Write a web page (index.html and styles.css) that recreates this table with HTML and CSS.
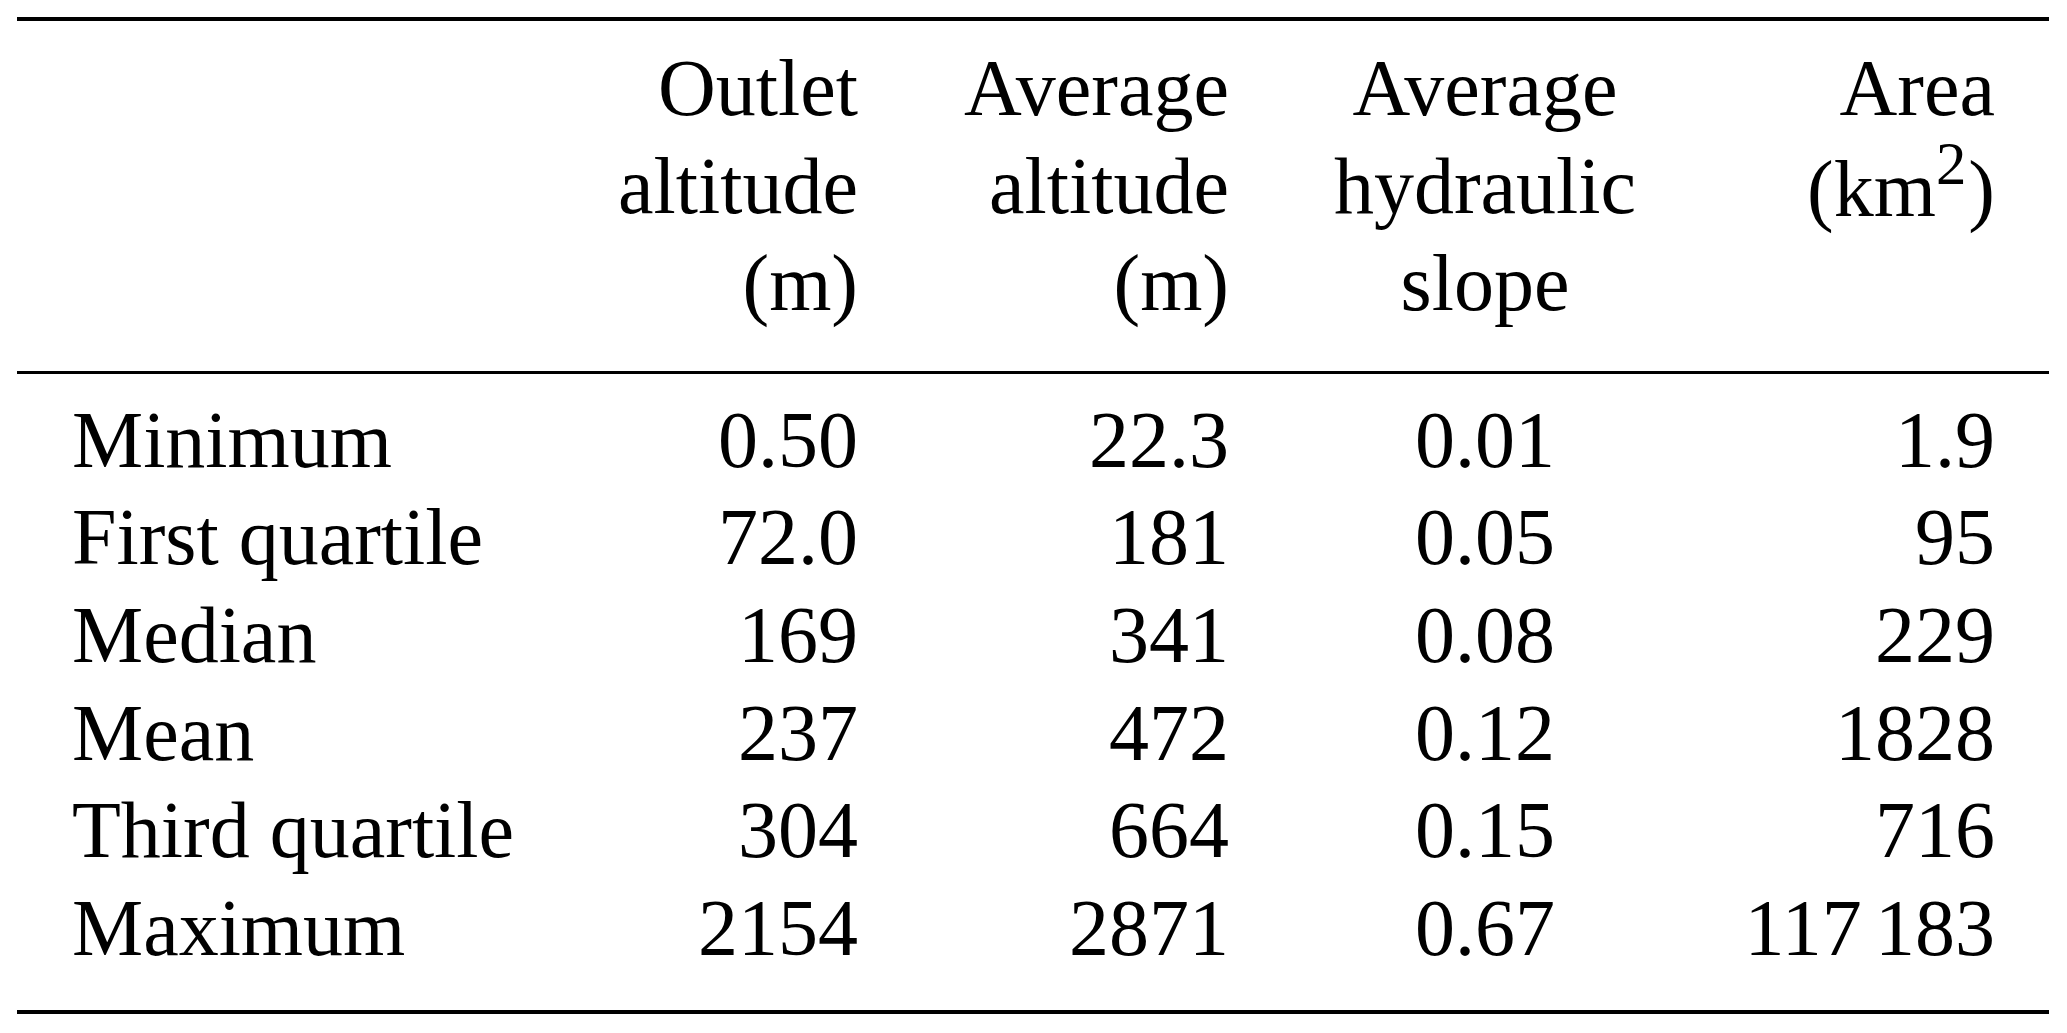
FILE: index.html
```html
<!DOCTYPE html>
<html lang="en">
<head>
<meta charset="utf-8">
<title>Catchment statistics</title>
<link rel="stylesheet" href="styles.css">
</head>
<body>
<div class="tbl">
  <div class="head grid">
    <div class="cell"></div>
    <div class="cell right">Outlet<br>altitude<br>(m)</div>
    <div class="cell right">Average<br>altitude<br>(m)</div>
    <div class="cell center">Average<br>hydraulic<br>slope</div>
    <div class="cell right">Area<br><span class="unit">(km<sup>2</sup>)</span></div>
  </div>
  <div class="body grid">
    <div class="cell">Minimum</div><div class="cell right">0.50</div><div class="cell right">22.3</div><div class="cell center">0.01</div><div class="cell right">1.9</div>
    <div class="cell">First quartile</div><div class="cell right">72.0</div><div class="cell right">181</div><div class="cell center">0.05</div><div class="cell right">95</div>
    <div class="cell">Median</div><div class="cell right">169</div><div class="cell right">341</div><div class="cell center">0.08</div><div class="cell right">229</div>
    <div class="cell">Mean</div><div class="cell right">237</div><div class="cell right">472</div><div class="cell center">0.12</div><div class="cell right">1828</div>
    <div class="cell">Third quartile</div><div class="cell right">304</div><div class="cell right">664</div><div class="cell center">0.15</div><div class="cell right">716</div>
    <div class="cell">Maximum</div><div class="cell right">2154</div><div class="cell right">2871</div><div class="cell center">0.67</div><div class="cell right">117<span class="thin"></span>183</div>
  </div>
</div>
</body>
</html>
```
FILE: styles.css
```css
html, body {
  margin: 0;
  padding: 0;
  background: #ffffff;
}

body {
  font-family: "Liberation Serif", "Times New Roman", serif;
  font-size: 80px;
  line-height: 97.6px;
  color: #000000;
}

.tbl {
  width: 2032px;
  margin: 17px 0 0 17px;
  border-top: 4px solid #000;
  border-bottom: 4px solid #000;
}

.grid {
  display: grid;
  grid-template-columns: 546px 240px 371px 512px 254px;
  padding-left: 55px;
  padding-right: 54px;
}

.head {
  padding-top: 19px;
  padding-bottom: 38px;
  border-bottom: 3px solid #000;
  align-items: start;
}

.body {
  padding-top: 18px;
  padding-bottom: 33px;
}

.cell {
  white-space: nowrap;
}

.right {
  text-align: right;
}

.center {
  text-align: center;
}

.unit {
  display: inline-block;
  margin-top: 3px;
}

sup {
  font-size: 0.76em;
  line-height: 0;
  vertical-align: 32px;
  margin-right: 2px;
}

.thin {
  display: inline-block;
  width: 0.167em;
}
```
